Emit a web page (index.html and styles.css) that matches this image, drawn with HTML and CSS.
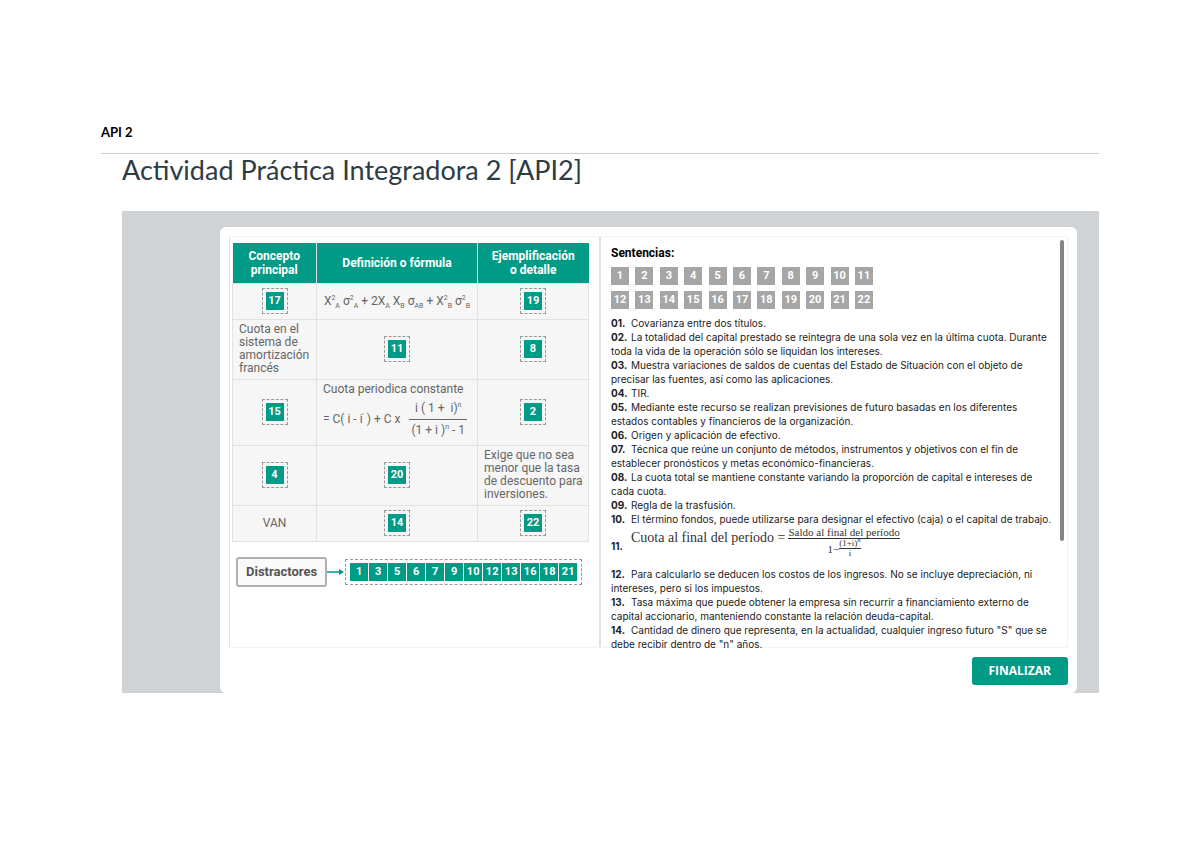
FILE: index.html
```html
<!DOCTYPE html>
<html lang="es">

<head>
    <meta charset="UTF-8">
    <meta name="viewport" content="width=device-width, initial-scale=1.0">
    <title>API 2</title>
    <link rel="stylesheet" href="styles.css">
</head>

<body>

    <header class="top">API 2</header>

    <main class="activity">
        <h1>Actividad Práctica Integradora 2 [API2]</h1>

        <div class="stage">
            <div class="card">
                <div class="panels">
                    <section class="board">
                        <table>
                            <thead>
                                <tr>
                                    <th class="concept">Concepto<br>principal</th>
                                    <th class="formula">Definición o fórmula</th>
                                    <th>Ejemplificación<br>o detalle</th>
                                </tr>
                            </thead>
                            <tbody>
                                <tr class="low">
                                    <td><span class="slot"><b class="chip">17</b></span></td>
                                    <td class="variance">X<sup>2</sup><sub>A</sub> σ<sup>2</sup><sub>A</sub> + 2X<sub>A</sub> X<sub>B</sub> σ<sub>AB</sub> + X<sup>2</sup><sub>B</sub> σ<sup>2</sup><sub>B</sub></td>
                                    <td><span class="slot"><b class="chip">19</b></span></td>
                                </tr>
                                <tr class="mid">
                                    <td class="text">Cuota en el<br>sistema de<br>amortización<br>francés</td>
                                    <td><span class="slot"><b class="chip">11</b></span></td>
                                    <td><span class="slot"><b class="chip">8</b></span></td>
                                </tr>
                                <tr class="high">
                                    <td><span class="slot"><b class="chip">15</b></span></td>
                                    <td class="text">
                                        <div>Cuota periodica constante</div>
                                        <div class="equation">
                                            <span>= C( i - i<sup>'</sup> ) + C x</span>
                                            <span class="fraction">
                                                <span class="over">i ( 1 +&nbsp; i)<sup>n</sup></span>
                                                <span class="under">(1 + i )<sup>n</sup> - 1</span>
                                            </span>
                                        </div>
                                    </td>
                                    <td><span class="slot"><b class="chip">2</b></span></td>
                                </tr>
                                <tr class="mid">
                                    <td><span class="slot"><b class="chip">4</b></span></td>
                                    <td><span class="slot"><b class="chip">20</b></span></td>
                                    <td class="text">Exige que no sea<br>menor que la tasa<br>de descuento para<br>inversiones.</td>
                                </tr>
                                <tr class="low">
                                    <td>VAN</td>
                                    <td><span class="slot"><b class="chip">14</b></span></td>
                                    <td><span class="slot"><b class="chip">22</b></span></td>
                                </tr>
                            </tbody>
                        </table>

                        <div class="distractors">
                            <div class="label">Distractores</div>
                            <svg class="arrow" width="18" height="8" viewBox="0 0 18 8">
                                <path d="M0 4H13" stroke="#009b86" stroke-width="1.5" />
                                <path d="M12 1L17 4L12 7Z" fill="#009b86" />
                            </svg>
                            <div class="tray">
                                <b class="chip">1</b>
                                <b class="chip">3</b>
                                <b class="chip">5</b>
                                <b class="chip">6</b>
                                <b class="chip">7</b>
                                <b class="chip">9</b>
                                <b class="chip">10</b>
                                <b class="chip">12</b>
                                <b class="chip">13</b>
                                <b class="chip">16</b>
                                <b class="chip">18</b>
                                <b class="chip">21</b>
                            </div>
                        </div>
                    </section>

                    <section class="sentences">
                        <h2>Sentencias:</h2>
                        <div class="numbers">
                            <b class="chip">1</b>
                            <b class="chip">2</b>
                            <b class="chip">3</b>
                            <b class="chip">4</b>
                            <b class="chip">5</b>
                            <b class="chip">6</b>
                            <b class="chip">7</b>
                            <b class="chip">8</b>
                            <b class="chip">9</b>
                            <b class="chip">10</b>
                            <b class="chip">11</b>
                            <b class="chip">12</b>
                            <b class="chip">13</b>
                            <b class="chip">14</b>
                            <b class="chip">15</b>
                            <b class="chip">16</b>
                            <b class="chip">17</b>
                            <b class="chip">18</b>
                            <b class="chip">19</b>
                            <b class="chip">20</b>
                            <b class="chip">21</b>
                            <b class="chip">22</b>
                        </div>
                        <p><b>01.</b>Covarianza entre dos títulos.</p>
                        <p><b>02.</b>La totalidad del capital prestado se reintegra de una sola vez en la última cuota. Durante<br>toda la vida de la operación sólo se liquidan los intereses.</p>
                        <p><b>03.</b>Muestra variaciones de saldos de cuentas del Estado de Situación con el objeto de<br>precisar las fuentes, así como las aplicaciones.</p>
                        <p><b>04.</b>TIR.</p>
                        <p><b>05.</b>Mediante este recurso se realizan previsiones de futuro basadas en los diferentes<br>estados contables y financieros de la organización.</p>
                        <p><b>06.</b>Origen y aplicación de efectivo.</p>
                        <p><b>07.</b>Técnica que reúne un conjunto de métodos, instrumentos y objetivos con el fin de<br>establecer pronósticos y metas económico-financieras.</p>
                        <p><b>08.</b>La cuota total se mantiene constante variando la proporción de capital e intereses de<br>cada cuota.</p>
                        <p><b>09.</b>Regla de la trasfusión.</p>
                        <p><b>10.</b>El término fondos, puede utilizarse para designar el efectivo (caja) o el capital de trabajo.</p>
                        <div class="quota">
                            <b>11.</b>
                            <span class="lead">Cuota al final del período =</span>
                            <span class="fraction">
                                <span class="over">Saldo al final del período</span>
                                <span class="under">
                                    <span>1−</span>
                                    <span class="fraction">
                                        <span class="over">(1+i)<sup>n</sup></span>
                                        <span class="under">i</span>
                                    </span>
                                </span>
                            </span>
                        </div>
                        <p><b>12.</b>Para calcularlo se deducen los costos de los ingresos. No se incluye depreciación, ni<br>intereses, pero si los impuestos.</p>
                        <p><b>13.</b>Tasa máxima que puede obtener la empresa sin recurrir a financiamiento externo de<br>capital accionario, manteniendo constante la relación deuda-capital.</p>
                        <p><b>14.</b>Cantidad de dinero que representa, en la actualidad, cualquier ingreso futuro "S" que se<br>debe recibir dentro de "n" años.</p>
                        <div class="thumb"></div>
                    </section>
                </div>

                <div class="actions">
                    <button type="button">FINALIZAR</button>
                </div>
            </div>
        </div>
    </main>

</body>

</html>
```
FILE: styles.css
```css
* {
    box-sizing: border-box;
}

body {
    margin: 0;
    padding: 123px 101px 0;
    background: #fff;
    color: #222;
    font-family: Roboto, sans-serif;
}

.top {
    height: 31px;
    border-bottom: 1px solid #ccc;
    color: #000;
    font: bold 13px/18px Lato, sans-serif;
}

.activity {
    padding-left: 21px;
}

h1 {
    margin: 0 0 26px;
    color: #2d3b45;
    font: 27px/31px Lato, sans-serif;
}

.stage {
    padding: 16px 22px 0 98px;
    background: #cfd3d6;
}

.card {
    padding: 9px 9px 8px;
    border-radius: 6px;
    background: #fff;
}

.panels {
    display: flex;
    height: 412px;
    border: 1px solid #f3f3f3;
    border-width: 1px 1px 1px 0;
}

.board {
    flex: 0 0 372px;
    padding: 6px 10px 0 2px;
    border: solid #e2e2e2;
    border-width: 0 2px 0 1px;
}

table {
    width: 100%;
    border-collapse: collapse;
    table-layout: fixed;
    background: #f6f6f6;
    color: #666;
    font-size: 12px;
    line-height: 13px;
}

th {
    height: 40px;
    padding: 0;
    border-right: 1px solid #e2e2e2;
    background: #009b86;
    color: #fff;
    line-height: 14px;
}

th:last-child {
    border-right: 0;
}

.concept {
    width: 84px;
}

.formula {
    width: 161px;
}

td {
    padding: 0;
    border: 1px solid #e2e2e2;
    text-align: center;
}

td.text {
    padding-left: 6px;
    text-align: left;
    white-space: nowrap;
}

.low td {
    height: 36px;
}

.mid td {
    height: 60px;
}

.high td {
    height: 66px;
}

sup,
sub {
    font-size: 7px;
    line-height: 0;
}

.variance {
    white-space: nowrap;
}

.slot {
    display: inline-block;
    padding: 3px;
    border: 1px dashed #999;
    vertical-align: middle;
}

.chip {
    display: block;
    width: 18px;
    height: 18px;
    background: #009b86;
    color: #fff;
    font-size: 11px;
    line-height: 18px;
    text-align: center;
}

.equation {
    display: flex;
    align-items: center;
    gap: 5px;
    margin-top: 2px;
}

.fraction {
    display: inline-flex;
    flex-direction: column;
    align-items: center;
}

.equation .over,
.equation .under {
    padding: 4px 6px;
}

.over {
    border-bottom: 1px solid currentColor;
}

.distractors {
    display: flex;
    align-items: center;
    margin: 15px 0 0 4px;
}

.label {
    padding: 4px 8px;
    border: 2px solid #b0b0b0;
    border-radius: 3px;
    background: #fafafa;
    color: #555;
    font-size: 13px;
    font-weight: bold;
    line-height: 18px;
}

.tray {
    display: flex;
    gap: 1px;
    padding: 3px 4px;
    border: 1px dashed #999;
}

.sentences {
    position: relative;
    flex: 1;
    min-width: 0;
    padding: 9px 10px 0;
    white-space: nowrap;
}

h2 {
    margin: 0 0 7px;
    color: #000;
    font-size: 12px;
    line-height: 14px;
}

.numbers {
    display: grid;
    grid-template-columns: repeat(11, 18px);
    justify-content: space-between;
    row-gap: 6px;
    width: 262px;
    margin-bottom: 7px;
}

.numbers .chip {
    background: #a6a6a6;
}

p {
    margin: 0;
    font: 10px/14px Inter, sans-serif;
}

p b {
    display: inline-block;
    width: 20px;
}

.quota {
    display: flex;
    align-items: flex-start;
    height: 41px;
    color: #333;
    font-family: "Liberation Serif", serif;
}

.quota > b {
    width: 20px;
    padding-top: 13px;
    color: #222;
    font: bold 10px/14px Inter, sans-serif;
}

.quota .lead {
    margin-right: 3px;
    padding-top: 5px;
    font-size: 14px;
    line-height: 14px;
}

.quota .fraction {
    font-size: 11px;
    line-height: 12px;
}

.quota .under {
    display: flex;
    align-items: center;
}

.quota .fraction .fraction {
    font-size: 9px;
    line-height: 9px;
}

.thumb {
    position: absolute;
    top: 3px;
    right: 3px;
    width: 4px;
    height: 301px;
    border-radius: 2px;
    background: #858585;
}

.actions {
    display: flex;
    justify-content: flex-end;
    padding-top: 9px;
}

button {
    padding: 5px 17px;
    border: 0;
    border-radius: 3px;
    background: #009b86;
    color: #fff;
    font: bold 12px/18px "Open Sans", sans-serif;
}
```
